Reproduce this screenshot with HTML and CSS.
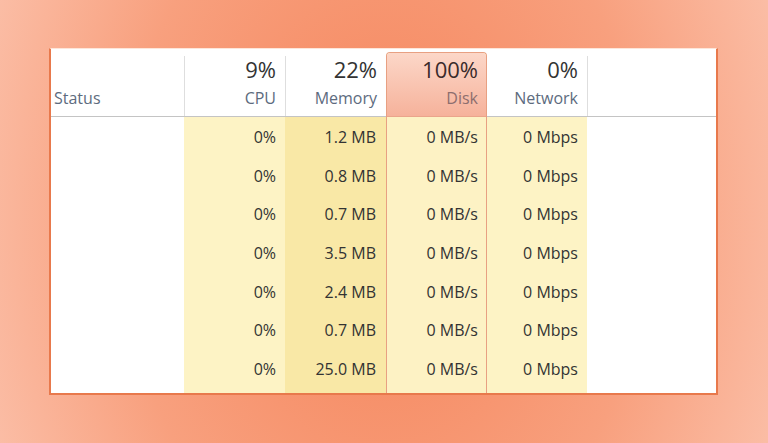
FILE: index.html
```html
<!DOCTYPE html>
<html>
<head>
<meta charset="utf-8">
<link rel="stylesheet" href="styles.css">
</head>
<body>
<div class="panel">
  <div class="col col-status">
    <div class="head"><div class="big"></div><div class="label">Status</div></div>
    <div class="cells">
      <div class="cell"></div><div class="cell"></div><div class="cell"></div><div class="cell"></div><div class="cell"></div><div class="cell"></div><div class="cell"></div>
    </div>
  </div>
  <div class="col col-cpu">
    <div class="head sep"><div class="big">9%</div><div class="label">CPU</div></div>
    <div class="cells">
      <div class="cell">0%</div><div class="cell">0%</div><div class="cell">0%</div><div class="cell">0%</div><div class="cell">0%</div><div class="cell">0%</div><div class="cell">0%</div>
    </div>
  </div>
  <div class="col col-mem">
    <div class="head sep"><div class="big">22%</div><div class="label">Memory</div></div>
    <div class="cells">
      <div class="cell">1.2 MB</div><div class="cell">0.8 MB</div><div class="cell">0.7 MB</div><div class="cell">3.5 MB</div><div class="cell">2.4 MB</div><div class="cell">0.7 MB</div><div class="cell">25.0 MB</div>
    </div>
  </div>
  <div class="col col-disk">
    <div class="head"><div class="big">100%</div><div class="label">Disk</div></div>
    <div class="cells">
      <div class="cell">0 MB/s</div><div class="cell">0 MB/s</div><div class="cell">0 MB/s</div><div class="cell">0 MB/s</div><div class="cell">0 MB/s</div><div class="cell">0 MB/s</div><div class="cell">0 MB/s</div>
    </div>
  </div>
  <div class="col col-net">
    <div class="head"><div class="big">0%</div><div class="label">Network</div></div>
    <div class="cells">
      <div class="cell">0 Mbps</div><div class="cell">0 Mbps</div><div class="cell">0 Mbps</div><div class="cell">0 Mbps</div><div class="cell">0 Mbps</div><div class="cell">0 Mbps</div><div class="cell">0 Mbps</div>
    </div>
  </div>
  <div class="col col-rest">
    <div class="head sep"></div>
    <div class="cells"></div>
  </div>
</div>
</body>
</html>
```

FILE: styles.css
```css
html, body {
  margin: 0;
  padding: 0;
}
body {
  width: 768px;
  height: 443px;
  overflow: hidden;
  display: flex;
  align-items: center;
  justify-content: center;
  background: radial-gradient(ellipse 62% 150% at 50% 50%, #f5845a 0%, #f8a07e 55%, #fcc8b4 100%);
  font-family: "Open Sans", "Noto Sans", sans-serif;
}
.panel {
  box-sizing: border-box;
  width: 669px;
  height: 347px;
  margin-top: -1px;
  margin-left: -1px;
  background: #ffffff;
  border-left: 2px solid #e8794c;
  border-right: 2px solid #e8794c;
  border-bottom: 2px solid #e8794c;
  border-top: 1px solid #fde6da;
  display: flex;
}
.col {
  display: flex;
  flex-direction: column;
  box-sizing: border-box;
}
.head {
  box-sizing: border-box;
  height: 68px;
  padding: 7px 9px 0 9px;
  border-bottom: 1px solid #c4c4c4;
  text-align: right;
  position: relative;
}
.head.sep::before {
  content: "";
  position: absolute;
  left: 0;
  top: 7px;
  bottom: 0;
  width: 1px;
  background: #dedede;
}
.big {
  font-size: 22px;
  line-height: 26px;
  height: 26px;
  color: #333333;
}
.label {
  margin-top: 6px;
  font-size: 16px;
  line-height: 20px;
  color: #5d6b7e;
}
.cells {
  flex: 1;
  padding-top: 1.5px;
}
.cell {
  height: 38.7px;
  line-height: 38.7px;
  font-size: 16px;
  color: #333333;
  text-align: right;
  padding-right: 9px;
}
.col-status { width: 133px; }
.col-status .head { text-align: left; padding-left: 3px; }
.col-cpu { width: 101px; background: linear-gradient(#fff 0, #fff 68px, #fdf3c5 68px); }
.col-mem { width: 101px; background: linear-gradient(#fff 0, #fff 68px, #f9e8a6 68px); }
.col-mem .cell { padding-right: 10px; }
.col-disk {
  width: 101px;
  margin-top: 3px;
  border: 1px solid #e8a082;
  border-bottom: none;
  border-radius: 4px 4px 0 0;
  background: #fdf2c4;
}
.col-disk .head {
  height: 64px;
  padding-top: 3px;
  padding-right: 8px;
  border-radius: 3px 3px 0 0;
  background: linear-gradient(#fcd7c8, #f6b29b);
  border-bottom: 1px solid #eaa58b;
}
.col-disk .big { color: #3a2b2b; }
.col-disk .label { color: #8d6e6e; }
.col-disk .cell { padding-right: 8px; }
.col-net { width: 100px; background: linear-gradient(#fff 0, #fff 68px, #fdf3c5 68px); }
.col-rest { flex: 1; }
```
